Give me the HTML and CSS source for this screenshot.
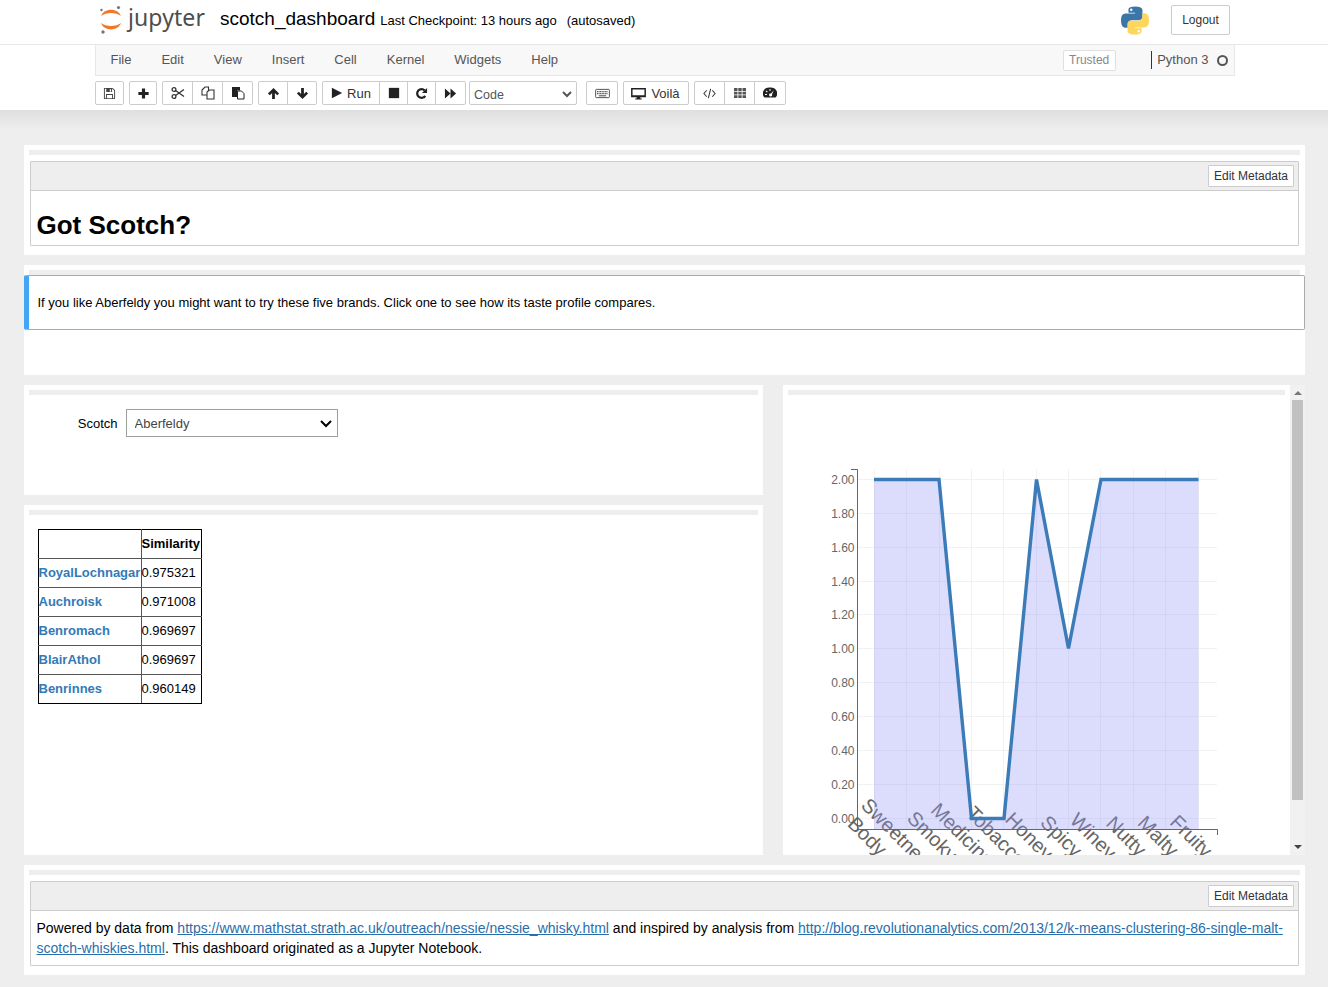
FILE: index.html
```html
<!DOCTYPE html>
<html lang="en">
<head>
<meta charset="utf-8">
<title>scotch_dashboard</title>
<link rel="stylesheet" href="styles.css">
</head>
<body>
<header class="topbar">
  <div class="topbar-inner">
    <svg class="logo-mark" viewBox="98 4 26 31" width="26" height="31">
      <path fill="#f37726" d="M101 16C104 7.500 118 7.500 121 16C116 12 106 12 101 16Z"/>
      <path fill="#f37726" d="M101 23C104 31.500 118 31.500 121 23C116 27 106 27 101 23Z"/>
      <circle cx="118.500" cy="7.500" r="1.600" fill="#767677"/>
      <circle cx="101.500" cy="10" r="1.200" fill="#767677"/>
      <circle cx="103" cy="32" r="1.700" fill="#767677"/>
    </svg>
    <span class="logo-text">jupyter</span>
    <span class="nb-name">scotch_dashboard</span>
    <span class="checkpoint">Last Checkpoint: 13 hours ago</span>
    <span class="autosave">(autosaved)</span>
    <svg class="python" viewBox="0 0 24 24" width="28" height="29">
      <path fill="#3a76a8" d="M12 0C6 0 6.400 2.600 6.400 2.600V5.300H12.100V6.100H4.100C4.100 6.100 0 5.600 0 12C0 18.400 3.600 18.200 3.600 18.200H5.700V15.200C5.700 15.200 5.600 11.700 9.200 11.700H15.100C15.100 11.700 18.400 11.800 18.400 8.500V3.100C18.400 3.100 18.900 0 12 0ZM8.800 1.800A1.050 1.050 0 1 1 8.800 3.900A1.050 1.050 0 1 1 8.800 1.800Z"/>
      <path fill="#fdd65a" transform="rotate(180 12 12)" d="M12 0C6 0 6.400 2.600 6.400 2.600V5.300H12.100V6.100H4.100C4.100 6.100 0 5.600 0 12C0 18.400 3.600 18.200 3.600 18.200H5.700V15.200C5.700 15.200 5.600 11.700 9.200 11.700H15.100C15.100 11.700 18.400 11.800 18.400 8.500V3.100C18.400 3.100 18.900 0 12 0ZM8.800 1.800A1.050 1.050 0 1 1 8.800 3.900A1.050 1.050 0 1 1 8.800 1.800Z"/>
    </svg>
    <button class="logout">Logout</button>
  </div>
</header>
<div class="chrome">
  <nav class="menubar">
    <span>File</span><span>Edit</span><span>View</span><span>Insert</span><span>Cell</span><span>Kernel</span><span>Widgets</span><span>Help</span>
    <span class="trusted">Trusted</span>
    <span class="kernel">Python 3</span>
    <i class="kernel-dot"></i>
  </nav>
  <div class="toolbar">
    <div class="group">
      <button class="tb w29"><svg viewBox="0 0 14 14" width="13" height="13"><path fill="#444" fill-rule="evenodd" d="M1 1H10.500L13 3.500V13H1ZM2 2V12H3.200V7.500H10.800V12H12V4L10.200 2H9.800V5.500H3.500V2ZM7.300 2.300H8.700V5H7.300ZM4.200 8.500V12H9.800V8.500Z"/></svg></button>
    </div>
    <div class="group">
      <button class="tb w28"><svg viewBox="0 0 14 14" width="13" height="13"><path fill="#222" d="M5.300 1.500H8.700V5.300H12.500V8.700H8.700V12.500H5.300V8.700H1.500V5.300H5.300Z"/></svg></button>
    </div>
    <div class="group">
      <button class="tb w31"><svg viewBox="0 0 14 14" width="14" height="14"><g fill="none" stroke="#333" stroke-width="1.300"><circle cx="3" cy="3.500" r="1.900"/><circle cx="3" cy="10.500" r="1.900"/><path d="M4.500 4.500L13 10.500M4.500 9.500L13 3.500"/></g></svg></button>
      <button class="tb w31"><svg viewBox="0 0 14 14" width="14" height="14"><g fill="#fff" stroke="#333" stroke-width="1.100"><path d="M1 4L4 1H7.500V9H1Z"/><path d="M6 6L8.500 4H13V13H6Z"/></g></svg></button>
      <button class="tb w31"><svg viewBox="0 0 14 14" width="14" height="14"><path fill="#222" d="M1 1H9V4.500H6V11H1Z"/><path fill="#fff" stroke="#222" d="M6.500 5H10.500L13 7.500V13H6.500Z"/></svg></button>
    </div>
    <div class="group">
      <button class="tb w30"><svg viewBox="0 0 14 14" width="13" height="13"><path fill="#222" d="M7 1L13 7L11 9L8.500 6.500V13H5.500V6.500L3 9L1 7Z"/></svg></button>
      <button class="tb w30"><svg viewBox="0 0 14 14" width="13" height="13"><path fill="#222" d="M7 13L13 7L11 5L8.500 7.500V1H5.500V7.500L3 5L1 7Z"/></svg></button>
    </div>
    <div class="group">
      <button class="tb run"><svg viewBox="0 0 14 14" width="12" height="12"><path fill="#222" d="M1 1L13 7L1 13Z"/></svg><span>Run</span></button>
      <button class="tb w29"><svg viewBox="0 0 14 14" width="12" height="12"><path fill="#222" d="M1 1H13V13H1Z"/></svg></button>
      <button class="tb w29"><svg viewBox="0 0 14 14" width="13" height="13"><path fill="none" stroke="#222" stroke-width="2.400" d="M11 9.500A4.700 4.700 0 1 1 10.500 3.800"/><path fill="#222" d="M13 1V6.500H7.500Z"/></svg></button>
      <button class="tb w31"><svg viewBox="0 0 14 14" width="13" height="13"><path fill="#222" d="M1 1.500L7 7L1 12.500ZM7 1.500L13 7L7 12.500Z"/></svg></button>
    </div>
    <select class="celltype"><option>Code</option></select>
    <div class="group keyboard">
      <button class="tb w32"><svg viewBox="0 0 16 12" width="15" height="11"><rect x=".5" y="1.500" width="15" height="9" rx="1" fill="#fff" stroke="#444"/><path stroke="#555" stroke-width="1.400" stroke-dasharray="1.200 .5" d="M2 4H14M2 6.200H14"/><path stroke="#555" stroke-width="1.200" d="M4 8.500H12"/></svg></button>
    </div>
    <div class="group">
      <button class="tb voila"><svg viewBox="0 0 16 14" width="15" height="13"><path fill="#222" fill-rule="evenodd" d="M0 1H16V11H10V12.500H11.500V13.500H4.500V12.500H6V11H0ZM1.600 2.600V9H14.400V2.600Z"/></svg><span>Voilà</span></button>
    </div>
    <div class="group">
      <button class="tb w31"><svg viewBox="0 0 14 14" width="13" height="13"><path fill="none" stroke="#333" stroke-width="1.100" d="M4 3.500L1 7L4 10.500M10 3.500L13 7L10 10.500M8.200 2L5.800 12"/></svg></button>
      <button class="tb w31"><svg viewBox="0 0 14 14" width="14" height="14"><path fill="#555" d="M1 2H4.500V5H1ZM5.300 2H8.700V5H5.300ZM9.500 2H13V5H9.500ZM1 5.700H4.500V8.500H1ZM5.300 5.700H8.700V8.500H5.300ZM9.500 5.700H13V8.500H9.500ZM1 9.200H4.500V12H1ZM5.300 9.200H8.700V12H5.300ZM9.500 9.200H13V12H9.500Z"/></svg></button>
      <button class="tb w32"><svg viewBox="0 0 14 14" width="14" height="14"><path fill="#222" fill-rule="evenodd" d="M7 1.500A6.500 6 0 0 1 12.500 11.500H1.500A6.500 6 0 0 1 7 1.500ZM6.500 3V5H7.500V3ZM3.400 4.500L2.700 5.200L4 6.500L4.700 5.800ZM10.600 4.500L8 7.500A1.500 1.500 0 1 0 9 8.400ZM2 8V9H4V8Z"/></svg></button>
    </div>
  </div>
</div>
<div class="shade"></div>
<main class="board">
  <section class="card wide">
    <div class="handle"></div>
    <div class="panel">
      <div class="panel-head"><button class="meta">Edit Metadata</button></div>
      <div class="panel-body"><h1>Got Scotch?</h1></div>
    </div>
  </section>
  <section class="card wide">
    <div class="handle"></div>
    <div class="alert">If you like Aberfeldy you might want to try these five brands. Click one to see how its taste profile compares.</div>
  </section>
  <section class="card picker">
    <div class="handle"></div>
    <div class="picker-row">
      <label class="picker-label" for="scotch">Scotch</label>
      <select id="scotch" class="picker-select"><option>Aberfeldy</option></select>
    </div>
  </section>
  <section class="card chart-card">
    <div class="chart-area">
      <div class="handle"></div>
      <svg class="chart" viewBox="783 385 507 470" width="507" height="470">
        <g stroke="#f2f2f2" fill="none">
          <path d="M857 479.500H1217M857 513.500H1217M857 547.500H1217M857 581.500H1217M857 614.500H1217M857 648.500H1217M857 682.500H1217M857 716.500H1217M857 750.500H1217M857 784.500H1217M857 818.500H1217"/>
          <path d="M874.500 469V829M906.500 469V829M939.500 469V829M971.500 469V829M1003.500 469V829M1036.500 469V829M1068.500 469V829M1100.500 469V829M1133.500 469V829M1165.500 469V829M1198.500 469V829"/>
        </g>
        <g class="xtick">
          <text transform="translate(862.500 841) rotate(45)">Body</text>
          <text transform="translate(894.500 841) rotate(45)">Sweetness</text>
          <text transform="translate(927.500 841) rotate(45)">Smoky</text>
          <text transform="translate(959.500 841) rotate(45)">Medicinal</text>
          <text transform="translate(991.500 841) rotate(45)">Tobacco</text>
          <text transform="translate(1024.500 841) rotate(45)">Honey</text>
          <text transform="translate(1056.500 841) rotate(45)">Spicy</text>
          <text transform="translate(1088.500 841) rotate(45)">Winey</text>
          <text transform="translate(1121.500 841) rotate(45)">Nutty</text>
          <text transform="translate(1153.500 841) rotate(45)">Malty</text>
          <text transform="translate(1186.500 841) rotate(45)">Fruity</text>
        </g>
        <path fill="#979cf5" fill-opacity=".34" d="M874 479.500H939L971.500 818.500H1004L1036.500 479.500L1068.500 648.500L1101 479.500H1198.500V829H874Z"/>
        <path fill="none" stroke="#3a7bb8" stroke-width="3.400" d="M874 479.500H939L971.500 818.500H1004L1036.500 479.500L1068.500 648.500L1101 479.500H1198.500"/>
        <path fill="none" stroke="#666" d="M851 469.500H857.500V829.500H1217.500V835"/>
        <g class="ytick">
          <text x="854.500" y="484">2.00</text><text x="854.500" y="518">1.80</text><text x="854.500" y="552">1.60</text><text x="854.500" y="586">1.40</text><text x="854.500" y="619">1.20</text><text x="854.500" y="653">1.00</text><text x="854.500" y="687">0.80</text><text x="854.500" y="721">0.60</text><text x="854.500" y="755">0.40</text><text x="854.500" y="789">0.20</text><text x="854.500" y="823">0.00</text>
        </g>
      </svg>
    </div>
    <div class="scrollbar">
      <i class="arrow-up"></i>
      <div class="thumb"></div>
      <i class="arrow-down"></i>
    </div>
  </section>
  <section class="card table-card">
    <div class="handle"></div>
    <table class="scores">
      <tr><th></th><th>Similarity</th></tr>
      <tr><td><a href="#">RoyalLochnagar</a></td><td>0.975321</td></tr>
      <tr><td><a href="#">Auchroisk</a></td><td>0.971008</td></tr>
      <tr><td><a href="#">Benromach</a></td><td>0.969697</td></tr>
      <tr><td><a href="#">BlairAthol</a></td><td>0.969697</td></tr>
      <tr><td><a href="#">Benrinnes</a></td><td>0.960149</td></tr>
    </table>
  </section>
  <section class="card wide">
    <div class="handle"></div>
    <div class="panel">
      <div class="panel-head"><button class="meta">Edit Metadata</button></div>
      <div class="panel-body credits">Powered by data from <a href="#">https://www.mathstat.strath.ac.uk/outreach/nessie/nessie_whisky.html</a> and inspired by analysis from <a href="#">http://blog.revolutionanalytics.com/2013/12/k-means-clustering-86-single-malt-scotch-whiskies.html</a>. This dashboard originated as a Jupyter Notebook.</div>
    </div>
  </section>
</main>
</body>
</html>
```
FILE: styles.css
```css
* { box-sizing: border-box; }
html, body { margin: 0; height: 987px; overflow: hidden; }
body {
  background: #eeeeee;
  font-family: "Liberation Sans", Arial, sans-serif;
  font-size: 13px;
  color: #000;
}
button, select { font-family: inherit; }

.topbar { height: 45px; background: #fff; border-bottom: 1px solid #e7e7e7; }
.topbar-inner { display: flex; align-items: center; height: 44px; padding: 0 98px 0 98px; }
.logo-mark { flex: none; margin-top: -5px; }
.logo-text { font-family: "Noto Sans", sans-serif; font-size: 23px; letter-spacing: .1px; color: #4e4e4e; margin: -10px 0 0 4px; width: 92px; }
.nb-name { font-size: 19px; margin: -6px 5px 0 0; }
.checkpoint { margin: -4px 10px 0 0; }
.autosave { margin-top: -4px; }
.python { margin-left: auto; margin-top: -3px; }
.logout {
  margin-left: 22px; width: 59px; height: 30px; padding: 0;
  background: #fff; border: 1px solid #ccc; border-radius: 2px;
  font-size: 12px; color: #333; margin-top: -4px;
}

.chrome { background: #fff; height: 65px; padding-left: 95px; }
.menubar {
  display: flex; align-items: center; gap: 30px;
  width: 1140px; height: 31px; padding: 0 0 0 14.5px;
  background: #f8f8f8; border: 1px solid #e7e7e7; border-top: 0;
  color: #555; line-height: 30px;
}
.trusted {
  margin-left: auto; height: 21px; width: 53px; margin-right: 5px;
  border: 1px solid #e0e0e0; background: #fff; border-radius: 2px;
  font-size: 12px; line-height: 19px; text-align: center; color: #888;
}
.kernel { border-left: 1px solid #333; height: 18px; line-height: 18px; padding-left: 5.5px; color: #555; }
.kernel-dot { width: 11px; height: 11px; border: 2px solid #555; border-radius: 50%; margin: 0 6px 0 -21.5px; }

.toolbar { display: flex; align-items: flex-start; gap: 5px; padding-top: 5px; }
.group { display: flex; height: 24px; }
.tb {
  display: flex; align-items: center; justify-content: center; gap: 4px;
  height: 24px; padding: 0; margin-left: -1px;
  background: #fff; border: 1px solid #ccc; color: #333; font-size: 13px;
}
.group .tb:first-child { margin-left: 0; border-radius: 2px 0 0 2px; }
.group .tb:last-child { border-radius: 0 2px 2px 0; }
.group .tb:only-child { border-radius: 2px; }
.w28 { width: 28px; } .w29 { width: 29px; } .w30 { width: 30px; } .w31 { width: 31px; } .w32 { width: 32px; }
.run { width: 58px; }
.voila { width: 66px; gap: 5px; padding-right: 1px; }
.celltype {
  appearance: none;
  width: 108px; height: 24px; margin-left: -2px; padding: 3px 0 0 4px;
  background: #fff url("data:image/svg+xml,%3Csvg xmlns='http://www.w3.org/2000/svg' width='10' height='7'%3E%3Cpath d='M1 1l4 4 4-4' fill='none' stroke='%23555' stroke-width='2'/%3E%3C/svg%3E") no-repeat right 4px top 9px;
  border: 1px solid #ccc; border-radius: 2px;
  font-size: 12.500px; color: #555;
}
.keyboard { margin-left: 4px; }

.shade { height: 20px; background: linear-gradient(#dfdfdf, #eeeeee); }

.board {
  display: grid;
  grid-template-columns: 739px 522px;
  grid-template-rows: 110px 110px 110px 350px 110px;
  column-gap: 20px; row-gap: 10px;
  padding: 15px 0 0 24px;
}
.card { background: #fff; min-width: 0; }
.wide { grid-column: 1 / 3; }
.picker { grid-column: 1; grid-row: 3; }
.chart-card { grid-column: 2; grid-row: 3 / 5; display: flex; background: #eee; }
.table-card { grid-column: 1; grid-row: 4; }
.handle { height: 5px; margin: 5px 5px 0; background: #eeeeee; }

.panel { margin: 6px 6px 0; height: 85px; border: 1px solid #ccc; border-radius: 1px; }
.panel-head {
  display: flex; justify-content: flex-end; align-items: center;
  height: 29px; padding-right: 4px;
  background: #eeeeee; border-bottom: 1px solid #ccc;
}
.meta {
  width: 86px; height: 22px; padding: 0;
  background: #fff; border: 1px solid #ccc; border-radius: 1px;
  font-size: 12px; color: #333;
}
.panel-body { padding: 0 5.500px; }
h1 { margin: 0; font-size: 26px; line-height: 30px; padding-top: 19px; color: #000; }
.credits { font-size: 14px; line-height: 20px; padding-top: 7px; }
.credits a { color: #296eaa; }

.alert {
  display: flex; align-items: center;
  height: 55px; padding-left: 8.500px;
  border: 1px solid #aaa; border-left: 5px solid #42a5f5; border-radius: 2px;
  font-size: 13px;
}

.picker-row { display: flex; align-items: center; gap: 8.500px; margin-top: 14px; }
.picker-label { width: 93.500px; text-align: right; }
.picker-select {
  appearance: none;
  width: 212px; height: 28px; padding: 0 0 0 7.500px;
  background: #fff url("data:image/svg+xml,%3Csvg xmlns='http://www.w3.org/2000/svg' width='12' height='8'%3E%3Cpath d='M1 1l5 5 5-5' fill='none' stroke='%23000' stroke-width='2'/%3E%3C/svg%3E") no-repeat right 5px top 10px;
  border: 1px solid #9e9e9e; border-radius: 0;
  font-size: 13px; color: #444;
}

.scores { border-collapse: collapse; margin: 14px 0 0 14px; border: 1px solid #000; font-size: 13px; }
.scores th, .scores td { height: 29px; padding: 0 0 2px; border: 1px solid #555; text-align: left; text-indent: -.5px; }
.scores tr:first-child th { border-top-color: #000; }
.scores td:first-child, .scores th:first-child { width: 103px; border-left-color: #000; }
.scores td:last-child, .scores th:last-child { width: 60px; border-right-color: #000; }
.scores tr:last-child td { border-bottom-color: #000; }
.scores a { color: #337ab7; font-weight: bold; text-decoration: none; }

.chart-area { width: 507px; height: 470px; background: #fff; overflow: hidden; position: relative; }
.chart-area .handle { position: absolute; left: 0; right: 0; top: 0; }
.chart { display: block; }
.ytick text { font: 12px "Liberation Sans", Arial, sans-serif; fill: #666; text-anchor: end; }
.xtick text { font: 20px "Liberation Sans", Arial, sans-serif; fill: #666; text-anchor: middle; }

.scrollbar { width: 15px; height: 470px; background: #f1f1f1; display: flex; flex-direction: column; align-items: center; }
.arrow-up { width: 0; height: 0; margin: 6px 0 5px; border: 4px solid transparent; border-top: 0; border-bottom: 4px solid #777; }
.thumb { width: 11px; height: 400px; background: #c1c1c1; flex: none; }
.arrow-down { width: 0; height: 0; margin-top: 45px; border: 4px solid transparent; border-bottom: 0; border-top: 4px solid #444; }
```
